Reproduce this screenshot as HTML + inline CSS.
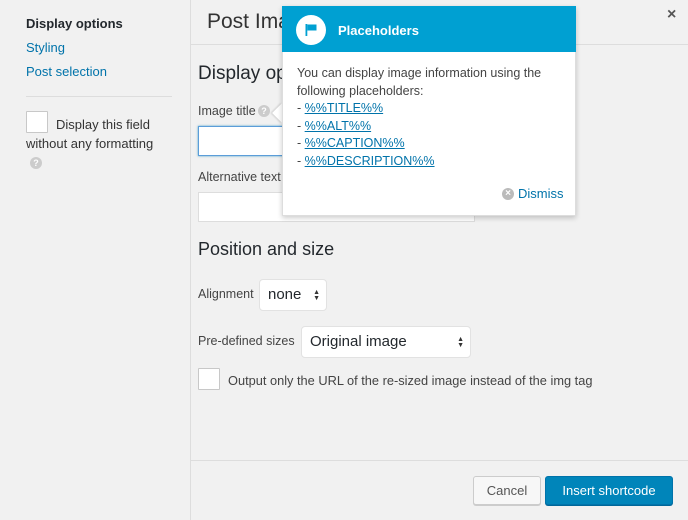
<!DOCTYPE html>
<html><head><style>
*{box-sizing:border-box;margin:0;padding:0}
body{width:688px;height:520px;overflow:hidden;background:#f1f1f1;font-family:"Liberation Sans",sans-serif;color:#23282d;position:relative;font-size:13px}
.a{position:absolute;white-space:nowrap}
.lnk{color:#0073aa}
.cb{position:absolute;width:22px;height:22px;background:#fff;border:1px solid #c8c8c8;border-radius:1px}
.inp{position:absolute;background:#fff;border:1px solid #ddd}
.sel{position:absolute;background:#fff;border:1px solid #e2e2e2;border-radius:4px;font-size:15px;padding-left:8px;line-height:30px}
.q{position:absolute;width:12px;height:12px;border-radius:50%;background:#ccc;color:#fff;font-size:9px;font-weight:bold;text-align:center;line-height:12px}
.arr{position:absolute;right:6px;top:10px;font-size:7px;line-height:6px;color:#333}
</style></head><body>
<div class="a" style="left:190px;top:0;width:1px;height:520px;background:#ddd"></div>
<div class="a" style="left:191px;top:44px;width:497px;height:1px;background:#ddd"></div>
<div class="a" style="left:26px;top:16px;font-weight:bold;font-size:13px">Display options</div>
<div class="a lnk" style="left:26px;top:40px">Styling</div>
<div class="a lnk" style="left:26px;top:64px">Post selection</div>
<div class="a" style="left:26px;top:96px;width:146px;height:1px;background:#ddd"></div>
<div class="cb" style="left:26px;top:111px"></div>
<div class="a" style="left:56px;top:117px;font-size:13px;color:#333">Display this field</div>
<div class="a" style="left:26px;top:136px;font-size:13px;color:#333">without any formatting</div>
<div class="q" style="left:30px;top:157px">?</div>

<div class="a" style="left:207px;top:10px;font-size:21px;font-weight:300;color:#333">Post Imag</div>
<div class="a" style="left:667px;top:6px;font-size:16px;color:#555;font-weight:bold">×</div>

<div class="a" style="left:198px;top:63px;font-size:19px">Display op</div>
<div class="a" style="left:198px;top:104px;font-size:12.5px;color:#444">Image title</div>
<div class="q" style="left:258px;top:105px">?</div>
<div class="inp" style="left:198px;top:126px;width:90px;height:30px;border:1px solid #5b9dd9;box-shadow:0 0 2px rgba(30,140,190,.8)"></div>
<div class="a" style="left:198px;top:170px;font-size:12.5px;color:#444">Alternative text</div>
<div class="inp" style="left:198px;top:192px;width:277px;height:30px"></div>
<div class="a" style="left:198px;top:239px;font-size:18px">Position and size</div>
<div class="a" style="left:198px;top:287px;font-size:12.5px;color:#444">Alignment</div>
<div class="sel" style="left:259px;top:279px;width:68px;height:32px">none<div class="arr">▲<br>▼</div></div>
<div class="a" style="left:198px;top:334px;font-size:12.5px;color:#444">Pre-defined sizes</div>
<div class="sel" style="left:301px;top:326px;width:170px;height:32px">Original image<div class="arr">▲<br>▼</div></div>
<div class="cb" style="left:198px;top:368px"></div>
<div class="a" style="left:228px;top:373px;font-size:12.8px;color:#444">Output only the URL of the re-sized image instead of the img tag</div>
<div class="a" style="left:191px;top:460px;width:497px;height:1px;background:#ddd"></div>
<div class="a" style="left:473px;top:476px;width:68px;height:29px;background:#f7f7f7;border:1px solid #ccc;border-radius:3px;box-shadow:0 1px 0 #ccc;text-align:center;line-height:27px;font-size:13px;color:#555">Cancel</div>
<div class="a" style="left:545px;top:476px;width:128px;height:29px;background:#0085ba;border:1px solid #0073aa;border-radius:3px;box-shadow:0 1px 0 #006799;text-align:center;line-height:27px;font-size:13px;color:#fff">Insert shortcode</div>

<div class="a" style="left:275px;top:106px;width:14px;height:14px;background:#fff;transform:rotate(45deg);box-shadow:-1px 1px 2px rgba(0,0,0,.15)"></div>
<div class="a" style="left:282px;top:6px;width:294px;height:210px;background:#fff;box-shadow:0 2px 5px rgba(0,0,0,.2);border:1px solid #ddd"></div>
<div class="a" style="left:282px;top:6px;width:294px;height:46px;background:#00a0d2"></div>
<div class="a" style="left:296px;top:15px;width:30px;height:30px;border-radius:50%;background:#fff"></div>
<svg class="a" style="left:303px;top:22px" width="16" height="16" viewBox="0 0 16 16"><rect x="2.5" y="2" width="1.8" height="12" fill="#00a0d2"/><path d="M4.3 2.5h9.2v6H4.3z" fill="#00a0d2"/></svg>
<div class="a" style="left:338px;top:23px;color:#fff;font-weight:bold;font-size:13px">Placeholders</div>
<div class="a" style="left:297px;top:65px;font-size:12.5px;line-height:17.5px;color:#444">You can display image information using the<br>following placeholders:<br>- <span class="lnk" style="text-decoration:underline">%%TITLE%%</span><br>- <span class="lnk" style="text-decoration:underline">%%ALT%%</span><br>- <span class="lnk" style="text-decoration:underline">%%CAPTION%%</span><br>- <span class="lnk" style="text-decoration:underline">%%DESCRIPTION%%</span></div>
<div class="a" style="left:502px;top:188px;width:12px;height:12px;border-radius:50%;background:#bbb;color:#fff;font-size:10px;line-height:12px;text-align:center;font-weight:bold">×</div>
<div class="a lnk" style="left:518px;top:186px;font-size:13px">Dismiss</div>
</body></html>
